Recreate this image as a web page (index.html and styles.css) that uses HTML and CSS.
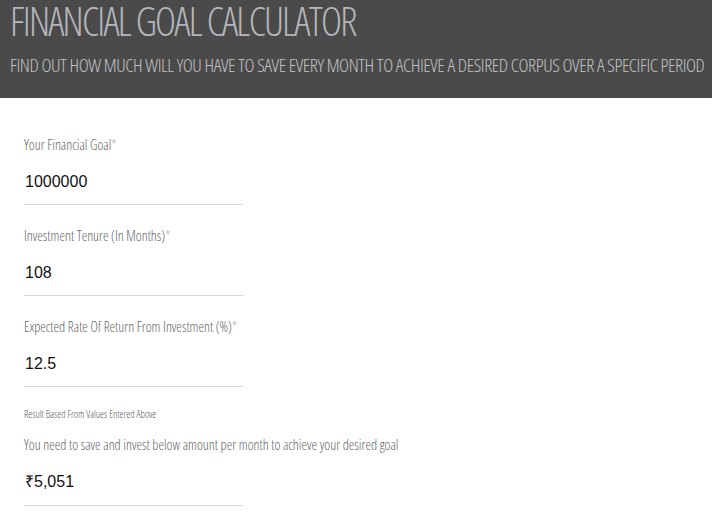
FILE: index.html
```html
<!DOCTYPE html>
<html lang="en">
<head>
    <meta charset="UTF-8">
    <meta name="viewport" content="width=device-width, initial-scale=1.0">
    <link rel="stylesheet" href="styles.css">
    <title>Financial Goal Calculator</title>
</head>
<body>
    <div class="banner">
        <h1 class="banner-title">FINANCIAL GOAL CALCULATOR</h1>
        <p class="banner-sub">FIND OUT HOW MUCH WILL YOU HAVE TO SAVE EVERY MONTH TO ACHIEVE A DESIRED CORPUS OVER A SPECIFIC PERIOD</p>
    </div>

    <form class="calc" id="calc">
        <div class="field">
            <label for="goal">Your Financial Goal<span class="req">*</span></label>
            <input type="text" id="goal" value="1000000" autofocus>
        </div>

        <div class="field">
            <label for="tenure">Investment Tenure (In Months)<span class="req">*</span></label>
            <input type="text" id="tenure" value="108">
        </div>

        <div class="field">
            <label for="rate">Expected Rate Of Return From Investment (%)<span class="req">*</span></label>
            <input type="text" id="rate" value="12.5">
        </div>

        <div class="result">
            <p class="result-note">Result Based From Values Entered Above</p>
            <p class="result-text">You need to save and invest below amount per month to achieve your desired goal</p>
            <div class="result-value" id="result">₹5,051</div>
        </div>
    </form>
</body>
</html>
```

FILE: styles.css
```css
*{
    box-sizing: border-box;
}

body{
    margin: 0;
    font-family: "Open Sans", sans-serif;
    background-color: #fff;
}

.banner{
    background-color: #4a4a4a;
    height: 98px;
    padding: 0 10px;
    overflow: hidden;
}

.banner-title{
    margin: 0;
    font-size: 40px;
    line-height: 42px;
    font-weight: 300;
    font-stretch: 75%;
    color: #b4b6ba;
    letter-spacing: -1.8px;
}

.banner-sub{
    margin: 11px 0 0;
    font-size: 19px;
    line-height: 24px;
    font-weight: 300;
    font-stretch: 75%;
    color: #c2c3c5;
    letter-spacing: -0.42px;
    white-space: nowrap;
}

.calc{
    padding: 37px 24px 0;
}

.field{
    width: 219px;
    height: 70px;
    border-bottom: 1px solid #d9d9d9;
}

.field + .field{
    margin-top: 21px;
}

.field label{
    display: block;
    font-size: 14px;
    line-height: 20px;
    font-weight: 300;
    font-stretch: 75%;
    color: #666;
    white-space: nowrap;
}

.req{
    color: #a0a0a0;
}

.field input{
    display: block;
    width: 100%;
    margin-top: 16px;
    padding: 0 1px;
    border: none;
    outline: none;
    font-family: "Liberation Sans", Arial, sans-serif;
    font-size: 16px;
    line-height: 22px;
    color: #111;
    background: transparent;
    caret-color: #000;
}

.result{
    margin-top: 20px;
}

.result-note{
    margin: 0;
    font-size: 10px;
    line-height: 14px;
    font-weight: 300;
    font-stretch: 75%;
    color: #555;
}

.result-text{
    margin: 14px 0 0;
    font-size: 14px;
    line-height: 20px;
    font-weight: 300;
    font-stretch: 75%;
    color: #666;
}

.result-value{
    width: 219px;
    margin-top: 16px;
    padding: 0 0 12px 1px;
    border-bottom: 1px solid #d9d9d9;
    font-family: "Liberation Sans", Arial, sans-serif;
    font-size: 16px;
    line-height: 22px;
    color: #111;
}
```
